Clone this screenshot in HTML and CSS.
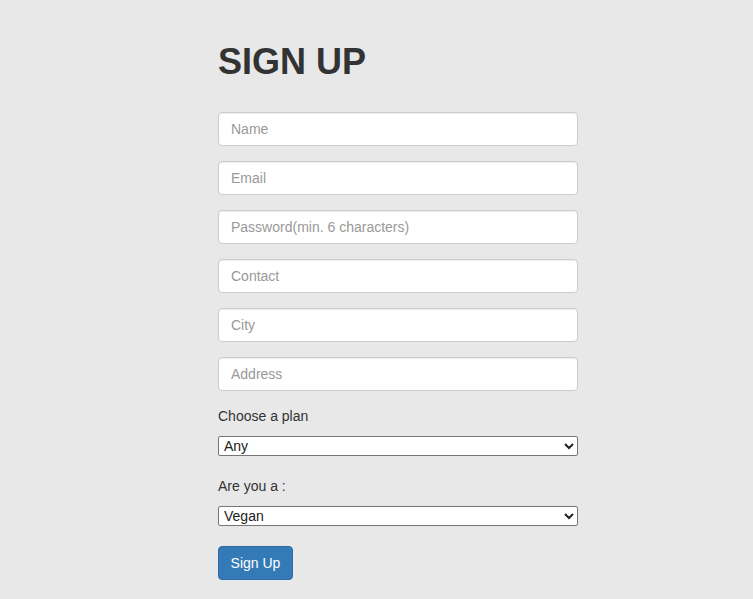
FILE: index.html
```html
<!DOCTYPE html>
<html lang="en">
<head>
<meta charset="utf-8">
<title>Sign Up</title>
<link rel="stylesheet" href="styles.css">
</head>
<body>
<div class="container">
  <h1 class="title">SIGN UP</h1>
  <form class="form">
    <div class="form-group"><input class="form-control" type="text" placeholder="Name"></div>
    <div class="form-group"><input class="form-control" type="email" placeholder="Email"></div>
    <div class="form-group"><input class="form-control" type="password" placeholder="Password(min. 6 characters)"></div>
    <div class="form-group"><input class="form-control" type="text" placeholder="Contact"></div>
    <div class="form-group"><input class="form-control" type="text" placeholder="City"></div>
    <div class="form-group"><input class="form-control" type="text" placeholder="Address"></div>
    <div class="select-group">
      <label class="label">Choose a plan</label>
      <select class="select"><option>Any</option><option>Basic</option><option>Premium</option></select>
    </div>
    <div class="select-group">
      <label class="label">Are you a :</label>
      <select class="select"><option>Vegan</option><option>Vegetarian</option><option>Non-Vegetarian</option></select>
    </div>
    <button class="btn" type="button">Sign Up</button>
  </form>
</div>
</body>
</html>
```

FILE: styles.css
```css
html, body {
  margin: 0;
  padding: 0;
}
body {
  background: #e8e8e8;
  font-family: "Liberation Sans", Arial, sans-serif;
  font-size: 14px;
  line-height: 1.42857;
  color: #333;
}
.container {
  width: 360px;
  margin: 0 auto 0 218px;
  padding-top: 22px;
}
.title {
  font-size: 36px;
  font-weight: 700;
  line-height: 1.1;
  margin: 20px 0 30px;
  color: #333;
}
.form {
  display: flex;
  flex-direction: column;
}
.form-group {
  margin-bottom: 15px;
}
.form-control {
  display: block;
  box-sizing: border-box;
  width: 100%;
  height: 34px;
  padding: 6px 12px;
  font-family: inherit;
  font-size: 14px;
  color: #555;
  background: #fff;
  border: 1px solid #ccc;
  border-radius: 4px;
  box-shadow: inset 0 1px 1px rgba(0,0,0,.075);
  outline: none;
}
.form-control::placeholder {
  color: #999;
}
.select-group {
  display: flex;
  flex-direction: column;
  margin-bottom: 20px;
}
.label {
  display: block;
  padding-top: 1px;
  margin-bottom: 9px;
}
.select {
  box-sizing: border-box;
  width: 100%;
  height: 20px;
  font-family: inherit;
  font-size: 14px;
  color: #222;
  background: #fff;
  border: 1px solid #767676;
  border-radius: 2px;
  padding: 0 1px;
}
.btn {
  align-self: flex-start;
  box-sizing: border-box;
  width: 75px;
  height: 34px;
  padding: 7px 0 5px;
  white-space: nowrap;
  text-align: center;
  font-family: inherit;
  font-size: 14px;
  line-height: 1.42857;
  color: #fff;
  background: #337ab7;
  border: 1px solid #2e6da4;
  border-radius: 4px;
}
```
